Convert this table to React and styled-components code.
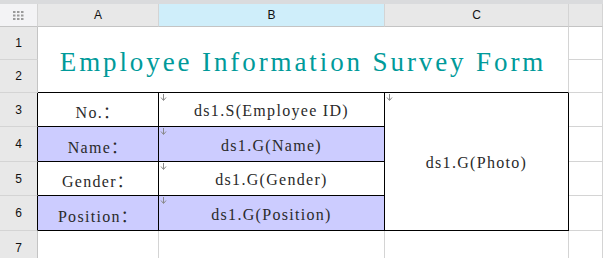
import React from "react";
import styled, { createGlobalStyle } from "styled-components";

const GlobalStyle = createGlobalStyle`
  body {
    margin: 0;
    background: #fff;
    font-family: "Liberation Sans", Arial, sans-serif;
  }
`;

const Sheet = styled.div`
  width: 603px;
  height: 258px;
  overflow: hidden;
  background: #fff;
`;

const TopStrip = styled.div`
  height: 4px;
  background: #dadbdd;
`;

const Grid = styled.div`
  display: grid;
  grid-template-columns: 38px 121px 226px 184px 1fr;
  grid-template-rows: 23px 33px 33px 34px 35px 34px 35px 35px;
`;

const Cell = styled.div`
  position: relative;
  box-sizing: border-box;
  display: flex;
  align-items: center;
  justify-content: center;
  border-right: 1px solid ${(p) => p.$right || "#d4d4d4"};
  border-bottom: 1px solid ${(p) => p.$bottom || "#d4d4d4"};
  background: ${(p) => (p.$fill ? "#ccccff" : "#fff")};
  font-family: "Liberation Serif", "Noto Sans CJK SC", serif;
  font-size: 16px;
  letter-spacing: 1.3px;
  color: #2a2a2a;
  padding-top: 3px;
  white-space: pre;
  grid-column: ${(p) => p.$col || "auto"};
  grid-row: ${(p) => p.$row || "auto"};
`;

const ColHead = styled.div`
  box-sizing: border-box;
  display: flex;
  align-items: center;
  justify-content: center;
  background: ${(p) => (p.$active ? "#cfeefa" : "#e8e8e8")};
  border-right: 1px solid #d4d4d4;
  border-bottom: 1px solid #c4c4c4;
  font-size: 12px;
  color: #111;
`;

const Corner = styled(ColHead)`
  background: #f3f3f5;
`;

const RowHead = styled.div`
  box-sizing: border-box;
  display: flex;
  align-items: center;
  justify-content: center;
  background: #e8e8e8;
  border-right: 1px solid ${(p) => (p.$edge ? "#000" : "#c4c4c4")};
  border-bottom: 1px solid #d4d4d4;
  font-size: 12px;
  color: #111;
`;

const Title = styled(Cell)`
  font-size: 27px;
  letter-spacing: 2.9px;
  color: #009a9a;
  padding-top: 6px;
`;

const Marker = styled.svg`
  position: absolute;
  left: 1px;
  top: 1px;
`;

const Arrow = () => (
  <Marker width="7" height="8" viewBox="0 0 7 8">
    <path d="M3.5 0V6" stroke="#8a8a8a" strokeWidth="1" />
    <path d="M1 3.5L3.5 6.5L6 3.5" stroke="#8a8a8a" strokeWidth="1" fill="none" />
  </Marker>
);

const Dots = () => (
  <svg width="11" height="9" viewBox="0 0 11 9">
    {[0, 1, 2].map((r) =>
      [0, 1, 2].map((c) => (
        <rect key={`${r}${c}`} x={c * 4} y={r * 3.5} width="2.5" height="2" fill="#9a9a9a" />
      ))
    )}
  </svg>
);

const rows = [
  { label: "No.：", value: "ds1.S(Employee ID)", fill: false },
  { label: "Name：", value: "ds1.G(Name)", fill: true },
  { label: "Gender：", value: "ds1.G(Gender)", fill: false },
  { label: "Position：", value: "ds1.G(Position)", fill: true },
];

export default function App() {
  return (
    <Sheet>
      <GlobalStyle />
      <TopStrip />
      <Grid>
        <Corner>
          <Dots />
        </Corner>
        <ColHead>A</ColHead>
        <ColHead $active>B</ColHead>
        <ColHead>C</ColHead>
        <ColHead />

        <RowHead style={{ gridRow: 2 }}>1</RowHead>
        <RowHead style={{ gridRow: 3 }}>2</RowHead>
        <Title $col="2 / 5" $row="2 / 4" $bottom="#000">
          Employee Information Survey Form
        </Title>
        <Cell $col="5" $row="2" />
        <Cell $col="5" $row="3" />

        {rows.map((r, i) => (
          <React.Fragment key={r.label}>
            <RowHead $edge style={{ gridRow: i + 4, gridColumn: 1 }}>
              {i + 3}
            </RowHead>
            <Cell $col="2" $row={`${i + 4}`} $fill={r.fill} $right="#000" $bottom="#000">
              {r.label}
            </Cell>
            <Cell $col="3" $row={`${i + 4}`} $fill={r.fill} $right="#000" $bottom="#000">
              <Arrow />
              {r.value}
            </Cell>
            <Cell $col="5" $row={`${i + 4}`} />
          </React.Fragment>
        ))}
        <Cell $col="4" $row="4 / 8" $right="#000" $bottom="#000">
          <Arrow />
          ds1.G(Photo)
        </Cell>

        <RowHead style={{ gridRow: 8, gridColumn: 1 }}>7</RowHead>
        <Cell $col="2" $row="8" />
        <Cell $col="3" $row="8" />
        <Cell $col="4" $row="8" />
        <Cell $col="5" $row="8" />
      </Grid>
    </Sheet>
  );
}
